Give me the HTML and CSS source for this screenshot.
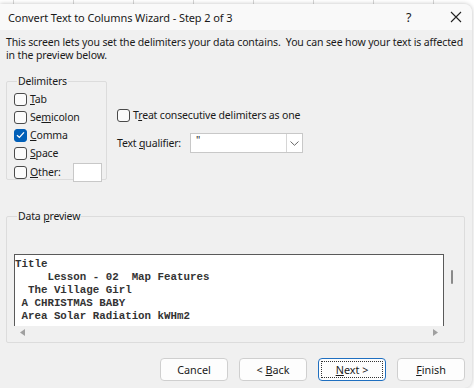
FILE: index.html
```html
<!DOCTYPE html>
<html lang="en">
<head>
  <meta charset="UTF-8" />
  <title>Convert Text to Columns Wizard - Step 2 of 3</title>
  <link rel="stylesheet" href="styles.css">
</head>
<body>
  <div class="dialog">
    <div class="titlebar">
      <span class="title">Convert Text to Columns Wizard - Step 2 of 3</span>
      <span class="help">?</span>
      <span class="close">
        <svg width="12" height="12" viewBox="0 0 12 12"><path d="M1 1L11 11M11 1L1 11" stroke="#222" stroke-width="1.1" fill="none"/></svg>
      </span>
    </div>

    <div class="content">
      <p class="intro">This screen lets you set the delimiters your data contains.&nbsp; You can see how your text is affected in the preview below.</p>

      <div class="options">
        <fieldset class="group delims">
          <legend>Delimiters</legend>
          <label class="check"><span class="box"></span><span><u>T</u>ab</span></label>
          <label class="check"><span class="box"></span><span>Se<u>m</u>icolon</span></label>
          <label class="check"><span class="box on"><svg width="9" height="8" viewBox="0 0 9 8"><path d="M1 4.2L3.4 6.4L8 1.4" stroke="#fff" stroke-width="1.3" fill="none"/></svg></span><span><u>C</u>omma</span></label>
          <label class="check"><span class="box"></span><span><u>S</u>pace</span></label>
          <label class="check other"><span class="box"></span><span><u>O</u>ther:</span><span class="other-input"></span></label>
        </fieldset>

        <div class="right-col">
          <label class="check"><span class="box"></span><span>T<u>r</u>eat consecutive delimiters as one</span></label>
          <div class="qualifier">
            <span>Text <u>q</u>ualifier:</span>
            <div class="combo">
              <span class="combo-value">"</span>
              <span class="combo-btn">
                <svg width="9" height="5" viewBox="0 0 9 5"><path d="M0.5 0.5L4.5 4.3L8.5 0.5" stroke="#666" stroke-width="1" fill="none"/></svg>
              </span>
            </div>
          </div>
        </div>
      </div>

      <fieldset class="group preview-group">
        <legend>Data <u>p</u>review</legend>
        <div class="preview-wrap">
          <pre class="preview">Title
     Lesson - 02  Map Features
  The Village Girl
 A CHRISTMAS BABY
 Area Solar Radiation kWHm2</pre>
          <div class="vscroll"><span class="thumb"></span></div>
          <div class="hscroll">
            <svg width="5" height="7" viewBox="0 0 5 7"><path d="M5 0L0 3.5L5 7Z" fill="#a0a0a0"/></svg>
            <svg width="5" height="7" viewBox="0 0 5 7"><path d="M0 0L5 3.5L0 7Z" fill="#a0a0a0"/></svg>
          </div>
        </div>
      </fieldset>

      <div class="buttons">
        <button class="btn">Cancel</button>
        <button class="btn">&lt; <u>B</u>ack</button>
        <button class="btn default"><span class="focus"><u>N</u>ext &gt;</span></button>
        <button class="btn"><u>F</u>inish</button>
      </div>
    </div>
  </div>
</body>
</html>
```

FILE: styles.css
```css
body {
  margin: 0;
  width: 474px;
  height: 388px;
  overflow: hidden;
  font-family: 'Noto Sans', 'Open Sans', sans-serif;
  color: #1a1a1a;
  background: #fff linear-gradient(to right, #d6d6d6 1px, transparent 1px);
  background-size: 60px 4px;
  background-repeat: repeat-x;
  background-position: 13px 0;
}

.dialog {
  margin-top: 4px;
  width: 472px;
  height: 384px;
  background: #f0f0f0;
  border-radius: 0 8px 8px 0;
  box-shadow: 0 0 4px rgba(0, 0, 0, 0.25);
  overflow: hidden;
}

.titlebar {
  height: 26px;
  display: flex;
  align-items: center;
  background: #f9f9f9;
  padding-left: 8px;
  font-size: 11px;
  letter-spacing: -0.1px;
}
.title { flex: 1; }
.help { width: 14px; font-size: 12.5px; margin-right: 30px; }
.close { width: 12px; margin-right: 10px; display: flex; }

.content {
  padding: 0 7px 0 6px;
  font-size: 10.5px;
  letter-spacing: -0.17px;
}

.intro {
  margin: 6px 0 0;
  line-height: 13px;
  letter-spacing: -0.13px;
}

.options {
  display: flex;
  align-items: flex-start;
  margin-top: 12px;
}

.group {
  margin: 0;
  border: 1px solid #dcdcdc;
  border-radius: 2px;
}
.group legend {
  padding: 0 1px;
  margin-left: 3px;
}

.delims {
  width: 101px;
  height: 106px;
  box-sizing: border-box;
  padding: 2px 0 0 7px;
}

.check {
  display: flex;
  align-items: center;
  height: 18px;
  gap: 3px;
}
.box {
  width: 11px;
  height: 11px;
  border: 1px solid #4a4a4a;
  border-radius: 3px;
  background: #fbfbfb;
  display: flex;
  align-items: center;
  justify-content: center;
  flex: none;
}
.box.on {
  background: #005fb8;
  border-color: #005fb8;
}
.check.other { height: 20px; }
.other-input {
  width: 27px;
  height: 17px;
  margin-left: 9px;
  background: #fff;
  border: 1px solid #c8c8c8;
}

.right-col {
  margin-left: 10px;
  padding-top: 32px;
  display: flex;
  flex-direction: column;
  gap: 9px;
}
.qualifier {
  display: flex;
  align-items: center;
}
.combo {
  margin-left: 9px;
  width: 111px;
  height: 18px;
  display: flex;
  background: #fff;
  border: 1px solid #c8c8c8;
}
.combo-value { flex: 1; padding-left: 5px; line-height: 12px; }
.combo-btn {
  width: 15px;
  border-left: 1px solid #d6d6d6;
  display: flex;
  align-items: center;
  justify-content: center;
}

.preview-group {
  margin-top: 29px;
  width: 459px;
  height: 134px;
  box-sizing: border-box;
  padding: 31px 0 0 7px;
}

.preview-wrap {
  display: grid;
  grid-template-columns: 430px 15px;
  grid-template-rows: 72px 12px;
}
.preview {
  margin: 0;
  height: 72px;
  box-sizing: border-box;
  background: #fff;
  border: 1px solid #5a5a5a;
  border-bottom: none;
  padding: 3px 0 0 0;
  font-family: 'Liberation Mono', 'Courier New', monospace;
  font-size: 10.8px;
  font-weight: bold;
  letter-spacing: 0;
  line-height: 13px;
  color: #333;
  overflow: hidden;
}
.vscroll {
  display: flex;
  justify-content: center;
  padding-top: 16px;
}
.thumb {
  width: 2px;
  height: 14px;
  background: #8a8a8a;
  border-radius: 1px;
}
.hscroll {
  display: flex;
  justify-content: space-between;
  align-items: center;
  padding: 0 6px;
}

.buttons {
  display: flex;
  justify-content: flex-end;
  gap: 11px;
  margin-top: 15px;
}
.btn {
  width: 68px;
  height: 23px;
  font-family: inherit;
  font-size: 10.8px;
  color: #1a1a1a;
  background: #fdfdfd;
  border: 1px solid #cfcfcf;
  border-radius: 4px;
  padding: 0;
}
.btn.default {
  border-color: #1f6fc0;
  padding: 2px;
}
.btn .focus {
  display: block;
  height: 100%;
  box-sizing: border-box;
  border: 1px dotted #333;
  line-height: 15px;
}
```
